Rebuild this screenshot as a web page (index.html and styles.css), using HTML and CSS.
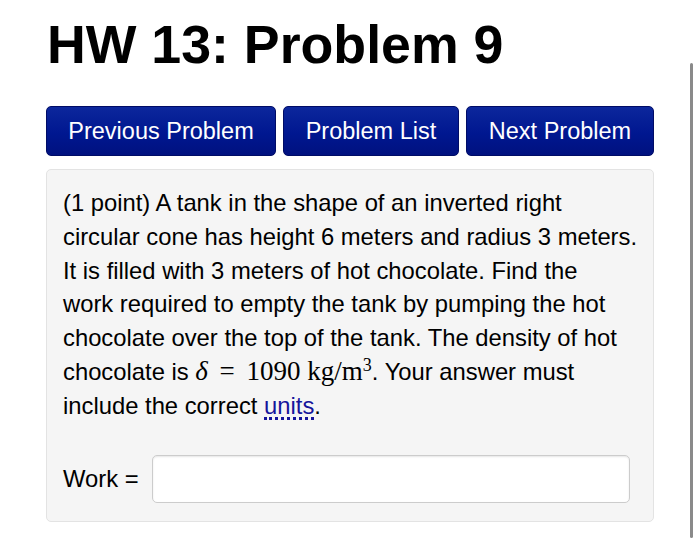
FILE: index.html
```html
<!DOCTYPE html>
<html>
<head>
<meta charset="utf-8">
<link rel="stylesheet" href="styles.css">
</head>
<body>
<div class="page">
  <h1 class="title">HW 13: Problem 9</h1>
  <div class="nav">
    <a class="btn btn-prev">Previous Problem</a>
    <a class="btn btn-list">Problem List</a>
    <a class="btn btn-next">Next Problem</a>
  </div>
  <div class="problem">
    <p class="text">(1 point) A tank in the shape of an inverted right circular cone has height 6 meters and radius 3 meters. It is filled with 3 meters of hot chocolate. Find the work&nbsp;required to empty the tank by pumping the hot chocolate over the top of the tank. The density of hot chocolate is <span class="math"><i>δ</i> <span class="op">=</span> 1090 kg/m<sup>3</sup></span>. Your answer must include the correct <span class="units">units</span>.</p>
    <div class="answer">
      <span class="label">Work =</span>
      <span class="input"></span>
    </div>
  </div>
</div>
<div class="scrollbar"></div>
</body>
</html>
```
FILE: styles.css
```css
html, body {
  margin: 0;
  padding: 0;
  background: #ffffff;
}
body {
  font-family: "Liberation Sans", Arial, sans-serif;
  color: #000;
  width: 700px;
  height: 538px;
  overflow: hidden;
}
.page {
  width: 608px;
  margin: 0 auto;
}
.title {
  margin: 15px 0 0 1px;
  font-size: 53.7px;
  line-height: 58px;
  font-weight: bold;
}
.nav {
  display: flex;
  gap: 7px;
  margin-top: 33px;
}
.btn {
  display: flex;
  align-items: center;
  justify-content: center;
  height: 50px;
  box-sizing: border-box;
  padding: 0 10px;
  border-radius: 5px;
  color: #fff;
  font-size: 23.5px;
  background: linear-gradient(#0c279c, #001790 55%, #00117f);
  border: 1px solid #000c66;
}
.btn-prev { width: 230px; }
.btn-list { width: 176px; }
.btn-next { width: 188px; }
.problem {
  margin-top: 13px;
  box-sizing: border-box;
  height: 353px;
  background: #f5f5f5;
  border: 1px solid #e3e3e3;
  border-radius: 5px;
  padding: 16px 12px 16px 16px;
}
.text {
  margin: 0;
  font-size: 23.8px;
  line-height: 33.8px;
}
.math {
  font-family: "Liberation Serif", "Times New Roman", serif;
  font-size: 27px;
  white-space: nowrap;
}
.math i {
  font-style: italic;
}
.math .op {
  margin: 0 5px;
}
.math sup {
  font-size: 18px;
  line-height: 0;
  vertical-align: 9px;
}
.units {
  color: #15159c;
  border-bottom: 3px dotted #15159c;
  line-height: 22px;
  display: inline-block;
}
.answer {
  display: flex;
  align-items: center;
  margin-top: 32px;
}
.label {
  font-size: 23.8px;
  width: 89px;
}
.input {
  display: block;
  width: 478px;
  height: 48px;
  box-sizing: border-box;
  background: #fff;
  border: 1px solid #cccccc;
  border-radius: 5px;
  box-shadow: inset 0 1px 2px rgba(0,0,0,0.1);
}
.scrollbar {
  position: fixed;
  left: 690px;
  top: 63px;
  width: 3px;
  height: 475px;
  background: #8a8a8a;
  border-radius: 2px;
}
```
